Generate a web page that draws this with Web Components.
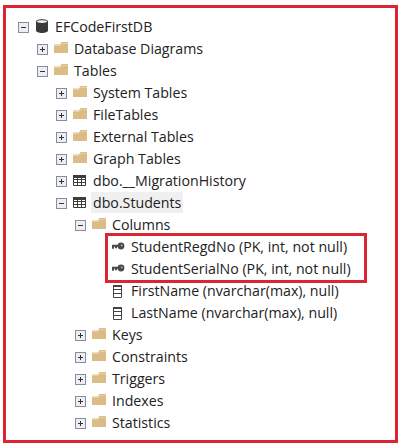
<!DOCTYPE html>
<html>
<head>
<meta charset="utf-8">
<title>Object Explorer</title>
<style>
  html, body { margin: 0; padding: 0; background: #fff; }
</style>
</head>
<body>
<tree-frame>
  <tree-node level="0" toggle="minus" icon="db">EFCodeFirstDB</tree-node>
  <tree-node level="1" toggle="plus" icon="folder">Database Diagrams</tree-node>
  <tree-node level="1" toggle="minus" icon="folder">Tables</tree-node>
  <tree-node level="2" toggle="plus" icon="folder">System Tables</tree-node>
  <tree-node level="2" toggle="plus" icon="folder">FileTables</tree-node>
  <tree-node level="2" toggle="plus" icon="folder">External Tables</tree-node>
  <tree-node level="2" toggle="plus" icon="folder">Graph Tables</tree-node>
  <tree-node level="2" toggle="plus" icon="table">dbo.__MigrationHistory</tree-node>
  <tree-node level="2" toggle="minus" icon="table" selected>dbo.Students</tree-node>
  <tree-node level="3" toggle="minus" icon="folder">Columns</tree-node>
  <tree-highlight>
    <tree-node level="4" icon="key">StudentRegdNo (PK, int, not null)</tree-node>
    <tree-node level="4" icon="key">StudentSerialNo (PK, int, not null)</tree-node>
  </tree-highlight>
  <tree-node level="4" icon="column">FirstName (nvarchar(max), null)</tree-node>
  <tree-node level="4" icon="column">LastName (nvarchar(max), null)</tree-node>
  <tree-node level="3" toggle="plus" icon="folder">Keys</tree-node>
  <tree-node level="3" toggle="plus" icon="folder">Constraints</tree-node>
  <tree-node level="3" toggle="plus" icon="folder">Triggers</tree-node>
  <tree-node level="3" toggle="plus" icon="folder">Indexes</tree-node>
  <tree-node level="3" toggle="plus" icon="folder">Statistics</tree-node>
</tree-frame>

<script>
  // icons are all drawn on a 15x16 box
  const ICONS = {
    db: `<path d="M1 2.5 C1 -.5 13 -.5 13 2.5 V11.5 C13 14.8 1 14.8 1 11.5 Z" fill="#3a3a3c"/>
         <ellipse cx="7" cy="2.6" rx="5" ry="1.3" fill="#f2f2f2"/>`,
    folder: `<path d="M0 3.5 H6 L7.5 1 H14 V12 H0 Z" fill="#dcbc86"/>
             <path d="M0 4.5 H6.5 L8 2.5 H14" fill="none" stroke="#e8cfa4" stroke-width="1"/>`,
    table: `<path d="M.5 3.5 H12.5 V12.5 H.5 Z M.5 6.5 H12.5 M.5 9.5 H12.5 M4.5 3.5 V12.5 M8.5 3.5 V12.5" fill="none" stroke="#3c3c3c" stroke-width="1"/>
            <path d="M0 2 H13 V5 H0 Z" fill="#3c3c3c"/>`,
    key: `<path d="M1 6.8 H8 M2 6.8 V9.8 M5 6.8 V9.3" fill="none" stroke="#4a4a4a" stroke-width="2"/>
          <circle cx="10" cy="7" r="3.4" fill="#4a4a4a"/>
          <circle cx="10.7" cy="6.4" r=".9" fill="#b5b5b5"/>`,
    column: `<path d="M2.5 2.5 H10.5 V14.5 H2.5 Z M2.5 6.5 H10.5 M2.5 10.5 H10.5" fill="none" stroke="#444" stroke-width="1"/>
             <path d="M2 2 H11 V4 H2 Z" fill="#444"/>`
  };

  class TreeFrame extends HTMLElement {
    constructor() {
      super();
      this.attachShadow({ mode: 'open' }).innerHTML = `
        <style>
          :host {
            display: block;
            box-sizing: border-box;
            width: 395px;
            height: 438px;
            margin: 5px 0 0 3px;
            padding: 8px 0 0 12px;
            border: 3px solid #dc2433;
            font: 14.2px "Open Sans", sans-serif;
            color: #222;
          }
        </style>
        <slot></slot>`;
    }
  }

  class TreeHighlight extends HTMLElement {
    constructor() {
      super();
      this.attachShadow({ mode: 'open' }).innerHTML = `
        <style>
          :host { display: block; position: relative; }
          .box {
            position: absolute;
            left: 87px;
            top: -3px;
            width: 262px;
            height: 50px;
            box-sizing: border-box;
            border: 3px solid #dc2433;
          }
        </style>
        <slot></slot>
        <div class="box"></div>`;
    }
  }

  class TreeNode extends HTMLElement {
    constructor() {
      super();
      const level = this.getAttribute('level') || 0;
      const toggle = this.getAttribute('toggle');
      const icon = this.getAttribute('icon');
      const bar = toggle === 'plus' ? '<path d="M5.5 3 V8" stroke="#333"/>' : '';
      this.attachShadow({ mode: 'open' }).innerHTML = `
        <style>
          :host {
            display: flex;
            align-items: center;
            height: 22px;
            padding-left: calc(${level} * 19px);
            white-space: nowrap;
          }
          .toggle { flex: none; width: 11px; height: 11px; margin-right: 6px; }
          .icon { flex: none; width: 15px; height: 16px; margin-right: 3px; }
          .label { padding: 0 2px; line-height: 21px; margin-top: -1px; }
          :host([selected]) .label { background: #f0f0f0; }
        </style>
        <svg class="toggle" viewBox="0 0 11 11" shape-rendering="crispEdges">
          ${toggle ? `<rect x=".5" y=".5" width="10" height="10" fill="#eceef4" stroke="#858e9e"/>
          <path d="M3 5.5 H8" stroke="#333"/>${bar}` : ''}
        </svg>
        <svg class="icon" viewBox="0 0 15 16">${ICONS[icon]}</svg>
        <span class="label"><slot></slot></span>`;
    }
  }

  customElements.define('tree-frame', TreeFrame);
  customElements.define('tree-highlight', TreeHighlight);
  customElements.define('tree-node', TreeNode);
</script>
</body>
</html>
